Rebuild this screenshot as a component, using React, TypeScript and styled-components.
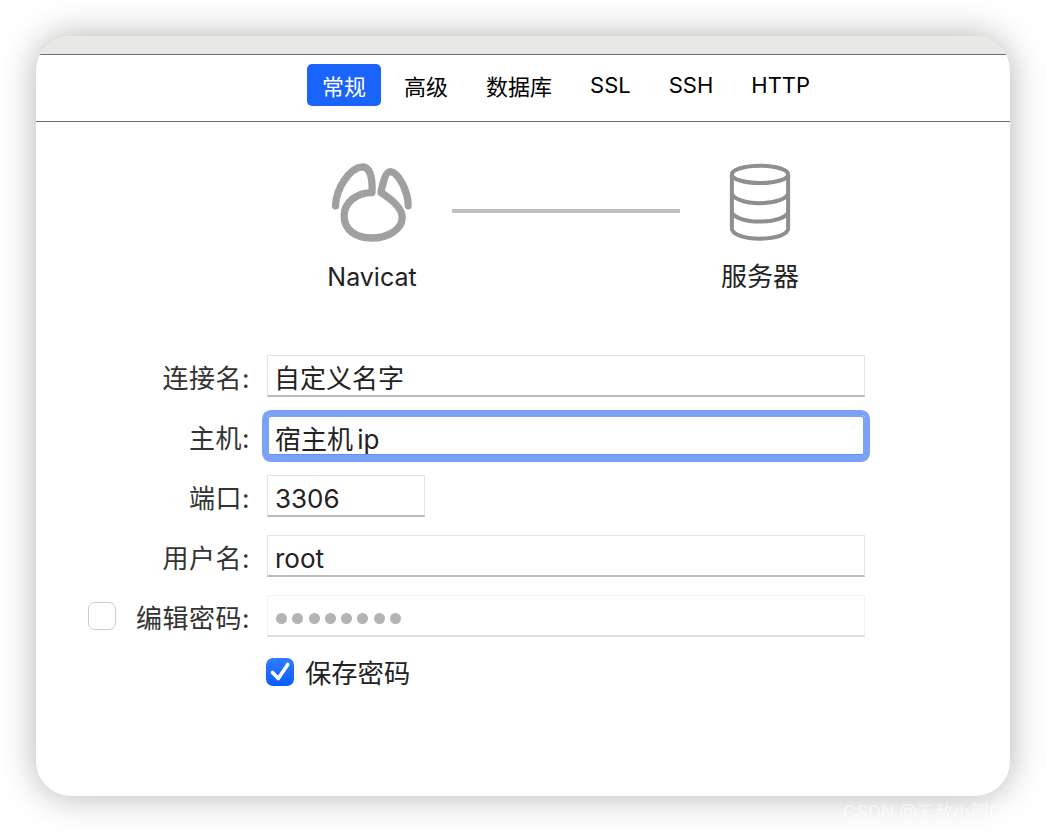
import styled, { createGlobalStyle } from "styled-components";

const GlobalStyle = createGlobalStyle`
  html, body {
    margin: 0;
    background: #fff;
  }
  body {
    font-family: Inter, "Noto Sans CJK SC", sans-serif;
    color: #222;
  }
`;

const Page = styled.div`
  position: relative;
  width: 1046px;
  height: 832px;
  padding: 36px;
  box-sizing: border-box;
  overflow: hidden;
`;

const Window = styled.div`
  width: 974px;
  height: 760px;
  border-radius: 35px;
  background: #fff;
  overflow: hidden;
  box-shadow: 0 0 36px rgba(0, 0, 0, 0.3);
`;

const TitleStrip = styled.div`
  height: 18px;
  background: #e9e8e4;
  border-bottom: 1px solid #6e6e6e;
`;

const Toolbar = styled.div`
  display: flex;
  gap: 8px;
  height: 67px;
  padding: 9px 0 15px 271px;
  box-sizing: border-box;
  border-bottom: 1px solid #6e6e6e;
`;

const Tab = styled.div<{ $active?: boolean }>`
  display: flex;
  align-items: center;
  padding: 0 15px;
  border-radius: 5px;
  font-size: 22px;
  color: ${(p) => (p.$active ? "#fff" : "#000")};
  background: ${(p) => (p.$active ? "#1b64fb" : "transparent")};
`;

const Diagram = styled.div`
  display: flex;
  padding: 41px 0 0 256px;
`;

const Node = styled.div`
  display: flex;
  flex-direction: column;
  align-items: center;
  width: 160px;
`;

const IconBox = styled.div`
  display: flex;
  align-items: center;
  justify-content: center;
  height: 78px;
`;

const NodeLabel = styled.div<{ $size: number }>`
  margin-top: 18px;
  line-height: 36px;
  font-size: ${(p) => p.$size}px;
  color: #222;
`;

const Connector = styled.div`
  width: 228px;
  height: 4px;
  margin-top: 46px;
  background: #c0c0c0;
`;

const Form = styled.div`
  display: flex;
  flex-direction: column;
  gap: 18px;
  margin-top: 60px;
`;

const Row = styled.div`
  display: grid;
  grid-template-columns: 231px 598px;
  align-items: center;
`;

const LabelCell = styled.div<{ $split?: boolean }>`
  display: flex;
  align-items: center;
  justify-content: ${(p) => (p.$split ? "space-between" : "flex-end")};
  padding: ${(p) => (p.$split ? "0 17px 0 52px" : "0 17px 0 0")};
  font-size: 26px;
  letter-spacing: 0.5px;
  color: #333;
`;

const Field = styled.div<{
  $width?: number;
  $focused?: boolean;
  $muted?: boolean;
  $latin?: boolean;
}>`
  display: flex;
  align-items: center;
  width: ${(p) => p.$width ?? 598}px;
  height: 42px;
  padding: ${(p) => (p.$latin ? "6px 0 0 7px" : "2px 0 0 6px")};
  box-sizing: border-box;
  font-size: 26px;
  color: #222;
  background: #fff;
  border: 1px solid ${(p) => (p.$muted ? "#f3f3f3" : "#e4e4e4")};
  border-bottom: 2px solid ${(p) => (p.$muted ? "#dedede" : "#bcbcbc")};
  ${(p) =>
    p.$focused &&
    `
    padding: 2px 0 0 8px;
    word-spacing: -3px;
    border: none;
    border-radius: 4px;
    box-shadow: 0 0 0 5px #7aa2f7, inset 0 0 0 2px #7aa2f7, inset 0 -3px 0 #6a90e6;
  `}
`;

const Dots = styled.div`
  display: flex;
  gap: 5.3px;
  margin-left: 1px;
`;

const Dot = styled.span`
  width: 11px;
  height: 11px;
  border-radius: 50%;
  background: #b4b4b4;
`;

const Box = styled.div<{ $checked?: boolean }>`
  display: flex;
  align-items: center;
  justify-content: center;
  width: 28px;
  height: 28px;
  box-sizing: border-box;
  border-radius: 7px;
  border: ${(p) => (p.$checked ? "none" : "1px solid #cdcdcd")};
  background: ${(p) =>
    p.$checked ? "linear-gradient(#2f7cff, #0a5cff)" : "#fff"};
`;

const CheckRow = styled.div`
  display: flex;
  align-items: center;
  gap: 11px;
  margin-left: -1px;
  height: 33px;
  font-size: 26.3px;
  color: #222;
`;

const Watermark = styled.div`
  position: absolute;
  left: 843px;
  top: 801px;
  font-size: 18px;
  line-height: 24px;
  color: rgba(255, 255, 255, 0.55);
  white-space: nowrap;
`;

const tabs = ["常规", "高级", "数据库", "SSL", "SSH", "HTTP"];

function NavicatIcon() {
  return (
    <svg width="85" height="83" viewBox="90 60 255 250" fill="none">
      <path
        d="M106 195C108 140 150 80 188 78C210 78 218 110 216 155C170 155 132 185 132 225C132 270 170 292 215 292C265 292 307 265 307 230C307 200 275 175 243 155C250 120 258 92 272 92C295 95 325 150 325 195"
        stroke="#a0a0a0"
        strokeWidth="22"
        strokeLinecap="round"
        strokeLinejoin="round"
      />
    </svg>
  );
}

function ServerIcon() {
  return (
    <svg width="64" height="82" viewBox="205 60 190 245" fill="none" stroke="#8f8f8f" strokeWidth="12">
      <ellipse cx="300" cy="100" rx="84" ry="26" />
      <path d="M216 100V262C216 280 255 292 300 292C345 292 384 280 384 262V100" />
      <path d="M216 155C216 172 255 186 300 186C345 186 384 172 384 155" />
      <path d="M216 210C216 227 255 241 300 241C345 241 384 227 384 210" />
    </svg>
  );
}

export default function App() {
  return (
    <>
      <GlobalStyle />
      <Page>
        <Window>
          <TitleStrip />
          <Toolbar>
            {tabs.map((t, i) => (
              <Tab key={t} $active={i === 0}>
                {t}
              </Tab>
            ))}
          </Toolbar>
          <Diagram>
            <Node>
              <IconBox>
                <NavicatIcon />
              </IconBox>
              <NodeLabel $size={25}>Navicat</NodeLabel>
            </Node>
            <Connector />
            <Node>
              <IconBox>
                <ServerIcon />
              </IconBox>
              <NodeLabel $size={26}>服务器</NodeLabel>
            </Node>
          </Diagram>
          <Form>
            <Row>
              <LabelCell>连接名:</LabelCell>
              <Field>自定义名字</Field>
            </Row>
            <Row>
              <LabelCell>主机:</LabelCell>
              <Field $focused>宿主机 ip</Field>
            </Row>
            <Row>
              <LabelCell>端口:</LabelCell>
              <Field $width={158} $latin>
                3306
              </Field>
            </Row>
            <Row>
              <LabelCell>用户名:</LabelCell>
              <Field $latin>root</Field>
            </Row>
            <Row>
              <LabelCell $split>
                <Box />
                编辑密码:
              </LabelCell>
              <Field $muted $latin>
                <Dots>
                  {Array.from({ length: 8 }).map((_, i) => (
                    <Dot key={i} />
                  ))}
                </Dots>
              </Field>
            </Row>
            <Row>
              <div />
              <CheckRow>
                <Box $checked>
                  <svg width="28" height="28" viewBox="0 0 28 28" fill="none">
                    <path
                      d="M6.5 14.5L12.3 20.5L21.8 6.5"
                      stroke="#fff"
                      strokeWidth="3.6"
                      strokeLinecap="round"
                      strokeLinejoin="round"
                    />
                  </svg>
                </Box>
                保存密码
              </CheckRow>
            </Row>
          </Form>
        </Window>
        <Watermark>CSDN @无敌小肥007</Watermark>
      </Page>
    </>
  );
}
